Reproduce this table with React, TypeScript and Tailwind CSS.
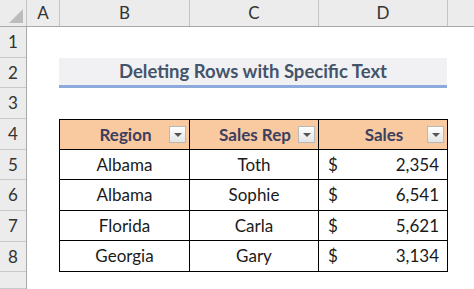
const font = { fontFamily: 'Lato, "Liberation Sans", sans-serif' }

const rowHeights = [31, 30, 31, 31, 30, 31, 31, 30, 17]

const data = [
  { region: 'Albama', rep: 'Toth', sales: '2,354' },
  { region: 'Albama', rep: 'Sophie', sales: '6,541' },
  { region: 'Florida', rep: 'Carla', sales: '5,621' },
  { region: 'Georgia', rep: 'Gary', sales: '3,134' },
]

const FilterButton = () => (
  <div className="
    flex h-[17px] w-[17px] items-center justify-center border border-[#b9b9b9]
    bg-gradient-to-b from-white to-[#e4e4e4]
  ">
    <div className="
      h-0 w-0 border-x-[4px] border-t-[4px] border-x-transparent
      border-t-[#555]
    " />
  </div>
)

const HeaderCell = ({ label, last }: { label: string; last?: boolean }) => (
  <div className={`
    flex h-full items-center border-black pl-[22px] pr-[3px]
    ${last ? '' : 'border-r-[1.5px]'}
  `}>
    <span className="flex-1 text-center text-[17px] font-bold text-[#3d3f5e]">{label}</span>
    <FilterButton />
  </div>
)

const App = () => {
  return (
    <div className="h-[289px] w-[474px] overflow-hidden bg-white text-[#222]" style={font}>
      <div className="flex h-[27px] border-b border-[#a9a9a9] bg-[#ececec] text-[17px] text-[#333]">
        <div className="relative w-[27px] border-r border-[#c4c4c4]">
          <div className="
            absolute right-[3px] bottom-[3px] h-0 w-0 border-b-[14px] border-l-[14px]
            border-b-[#bcbcbc] border-l-transparent
          " />
        </div>
        <div className="flex w-[33px] items-center justify-center border-r border-[#c4c4c4]">A</div>
        <div className="flex w-[130px] items-center justify-center border-r border-[#c4c4c4]">B</div>
        <div className="flex w-[129px] items-center justify-center border-r border-[#c4c4c4]">C</div>
        <div className="flex w-[129px] items-center justify-center border-r border-[#c4c4c4]">D</div>
        <div className="flex-1" />
      </div>

      <div className="flex">
        <div className="w-[27px] border-r border-[#a9a9a9] bg-[#ececec] text-[17px] text-[#333]">
          {rowHeights.map((h, i) => (
            <div
              key={i}
              className="flex items-center justify-center border-b border-[#c9c9c9]"
              style={{ height: h }}
            >
              {i < 8 ? i + 1 : ''}
            </div>
          ))}
        </div>

        <div className="flex-1 pl-[32px]">
          <div className="h-[31px]" />
          <div className="
            flex h-[30px] w-[388px] items-center justify-center border-b-[3px]
            border-[#8ea9db] bg-[#f1f1f3] text-[18.5px] font-bold text-[#44546a]
          ">
            Deleting Rows with Specific Text
          </div>
          <div className="h-[31px]" />

          <div className="w-[389px] border-[1.5px] border-black">
            <div className="grid h-[30px] grid-cols-[130px_129px_1fr] border-b-[1.5px] border-black bg-[#f9c9a0]">
              <HeaderCell label="Region" />
              <HeaderCell label="Sales Rep" />
              <HeaderCell label="Sales" last />
            </div>
            {data.map((row, i) => (
              <div
                key={i}
                className={`
                  grid grid-cols-[130px_129px_1fr] text-[17px] text-[#1a1a1a]
                  ${i === 1 ? 'h-[31px]' : 'h-[30px]'}
                  ${i < data.length - 1 ? 'border-b-[1.5px] border-black' : ''}
                `}
              >
                <div className="flex items-center justify-center border-r-[1.5px] border-black">{row.region}</div>
                <div className="flex items-center justify-center border-r-[1.5px] border-black">{row.rep}</div>
                <div className="flex items-center justify-between pr-[8px] pl-[9px]">
                  <span>$</span>
                  <span>{row.sales}</span>
                </div>
              </div>
            ))}
          </div>
        </div>
      </div>
    </div>
  )
}

export default App
